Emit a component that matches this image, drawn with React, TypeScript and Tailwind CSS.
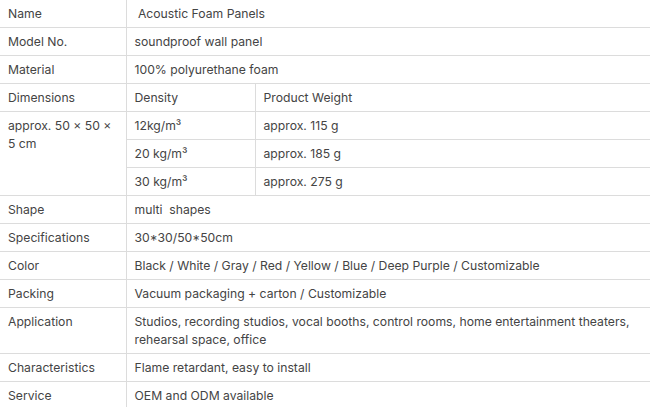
import React from 'react';

interface SpecRow {
  label: string;
  value: string;
}

const topRows: SpecRow[] = [
  { label: 'Name', value: '\u00a0Acoustic Foam Panels' },
  { label: 'Model No.', value: 'soundproof wall panel' },
  { label: 'Material', value: '100% polyurethane foam' },
];

const densities = [
  { density: '12kg/m³', weight: 'approx. 115 g' },
  { density: '20 kg/m³', weight: 'approx. 185 g' },
  { density: '30 kg/m³', weight: 'approx. 275 g' },
];

const bottomRows: SpecRow[] = [
  { label: 'Shape', value: 'multi\u00a0 shapes' },
  { label: 'Specifications', value: '30*30/50*50cm' },
  { label: 'Color', value: 'Black / White / Gray / Red / Yellow / Blue / Deep Purple / Customizable' },
  { label: 'Packing', value: 'Vacuum packaging + carton / Customizable' },
  {
    label: 'Application',
    value: 'Studios, recording studios, vocal booths, control rooms, home entertainment theaters, rehearsal space, office',
  },
  { label: 'Characteristics', value: 'Flame retardant, easy to install' },
  { label: 'Service', value: 'OEM and ODM available' },
];

const cell = 'align-top border-b border-[#dcdcdc] px-[8px] pt-[5px] pb-[4px] leading-[18px]';
const labelCell = cell + ' border-r';

export default function App() {
  return (
    <div className="w-[650px] h-[407px] overflow-hidden bg-white">
      <table
        className="w-full border-collapse table-fixed text-[12.2px] text-[#444]"
        style={{ fontFamily: 'Inter, "Liberation Sans", sans-serif' }}
      >
        <colgroup>
          <col className="w-[126px]" />
          <col className="w-[129px]" />
          <col />
        </colgroup>
        <tbody>
          {topRows.map((row) => (
            <tr key={row.label} className="h-[27.75px]">
              <td className={labelCell}>{row.label}</td>
              <td className={cell} colSpan={2}>{row.value}</td>
            </tr>
          ))}
          <tr className="h-[27.75px]">
            <td className={labelCell}>Dimensions</td>
            <td className={labelCell}>Density</td>
            <td className={cell}>Product Weight</td>
          </tr>
          {densities.map((d, i) => (
            <tr key={d.density} className="h-[27.75px]">
              {i === 0 && (
                <td className={labelCell} rowSpan={3}>
                  approx. 50 × 50 × 5 cm
                </td>
              )}
              <td className={labelCell}>{d.density}</td>
              <td className={cell}>{d.weight}</td>
            </tr>
          ))}
          {bottomRows.map((row) => (
            <tr key={row.label} className="h-[27.75px]">
              <td className={labelCell}>{row.label}</td>
              <td className={cell} colSpan={2}>{row.value}</td>
            </tr>
          ))}
        </tbody>
      </table>
    </div>
  );
}
